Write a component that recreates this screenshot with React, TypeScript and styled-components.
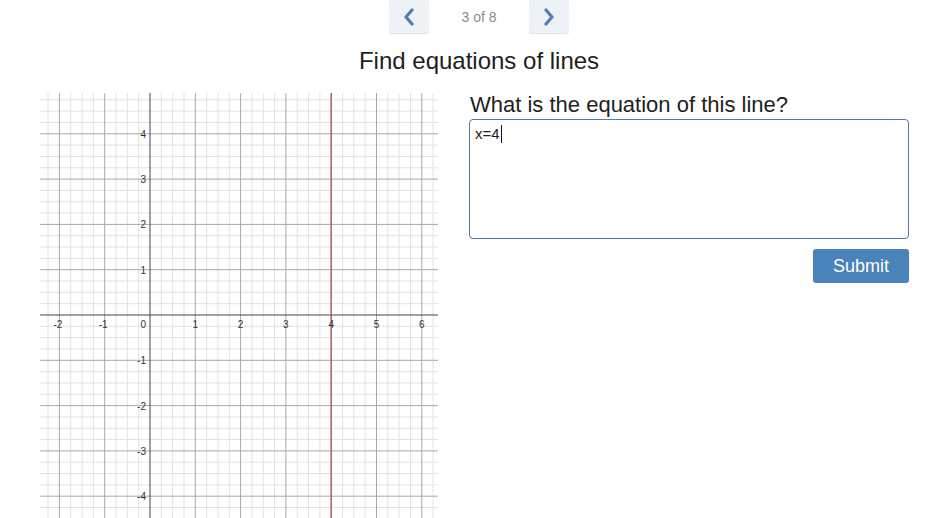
import React from 'react';
import styled, { createGlobalStyle } from 'styled-components';

const GlobalStyle = createGlobalStyle`
  html, body {
    margin: 0;
    padding: 0;
    background: #ffffff;
    overflow: hidden;
  }
  body {
    font-family: 'Liberation Sans', Arial, sans-serif;
    color: #222222;
  }
`;

const Page = styled.div`
  width: 938px;
  height: 518px;
  overflow: hidden;
`;

const Pager = styled.div`
  display: flex;
  justify-content: center;
  align-items: center;
  padding-left: 20px;
  height: 33px;
`;

const NavButton = styled.button`
  width: 40px;
  height: 33px;
  border: none;
  border-radius: 0 0 3px 3px;
  background: #eef2f7;
  box-shadow: 0 1px 1px rgba(0, 0, 0, 0.12);
  display: flex;
  align-items: center;
  justify-content: center;
  padding: 0;
  cursor: pointer;
`;

const PagerLabel = styled.span`
  width: 100px;
  text-align: center;
  font-size: 14px;
  color: #8a8a8a;
`;

const Title = styled.h1`
  margin: 14px 0 0 0;
  padding-left: 20px;
  text-align: center;
  font-size: 24px;
  font-weight: normal;
  line-height: 28px;
  color: #1e1e1e;
`;

const Body = styled.div`
  display: flex;
  align-items: flex-start;
  gap: 31px;
  padding: 18px 0 0 40px;
`;

const GraphFrame = styled.div`
  width: 398px;
  flex: none;
`;

const Panel = styled.div`
  width: 440px;
  display: flex;
  flex-direction: column;
`;

const Question = styled.div`
  font-size: 22px;
  line-height: 24px;
  color: #1e1e1e;
  padding-left: 1px;
  margin-bottom: 2px;
`;

const Answer = styled.div`
  box-sizing: border-box;
  height: 120px;
  border: 1px solid #4f7aa6;
  border-radius: 4px;
  padding: 5px 5px;
  font-size: 15px;
  line-height: 18px;
  color: #222;
  display: flex;
  align-items: flex-start;
`;

const Caret = styled.span`
  display: inline-block;
  width: 1px;
  height: 18px;
  background: #111;
  margin-left: 1px;
`;

const Actions = styled.div`
  display: flex;
  justify-content: flex-end;
  margin-top: 10px;
`;

const SubmitButton = styled.button`
  width: 96px;
  height: 34px;
  border: none;
  border-radius: 3px;
  background: #4a82ba;
  color: #ffffff;
  font-family: 'Liberation Sans', Arial, sans-serif;
  font-size: 18px;
  padding: 0;
`;

const Chevron = ({ dir }: { dir: 'left' | 'right' }) => (
  <svg width="14" height="18" viewBox="0 0 14 18">
    <path
      d={dir === 'left' ? 'M10 2 L4 9 L10 16' : 'M4 2 L10 9 L4 16'}
      fill="none"
      stroke="#4d7fb8"
      strokeWidth="3.2"
      strokeLinecap="round"
      strokeLinejoin="round"
    />
  </svg>
);

// graph geometry, all in svg px
const W = 398;
const H = 440;
const OX = 110;
const OY = 222;
const U = 45.3;

const Graph = () => {
  const minorV: number[] = [];
  const minorH: number[] = [];
  for (let k = -12; k <= 28; k++) {
    const x = OX + (k * U) / 4;
    if (x > 0 && x < W && k % 4 !== 0) minorV.push(x);
  }
  for (let k = -24; k <= 24; k++) {
    const y = OY - (k * U) / 4;
    if (y > 0 && y < H && k % 4 !== 0) minorH.push(y);
  }
  const majorX = [-2, -1, 1, 2, 3, 4, 5, 6];
  const majorY = [4, 3, 2, 1, -1, -2, -3, -4];

  return (
    <svg width={W} height={H} viewBox={`0 0 ${W} ${H}`} style={{ display: 'block' }}>
      {minorV.map(x => (
        <line key={'mv' + x} x1={x} y1={0} x2={x} y2={H} stroke="#e2e2e2" strokeWidth="1" />
      ))}
      {minorH.map(y => (
        <line key={'mh' + y} x1={0} y1={y} x2={W} y2={y} stroke="#e2e2e2" strokeWidth="1" />
      ))}
      {majorX.map(n => (
        <line key={'vx' + n} x1={OX + n * U} y1={0} x2={OX + n * U} y2={H} stroke="#a8a8a8" strokeWidth="1" />
      ))}
      {majorY.map(n => (
        <line key={'hy' + n} x1={0} y1={OY - n * U} x2={W} y2={OY - n * U} stroke="#a8a8a8" strokeWidth="1" />
      ))}
      <line x1={0} y1={OY} x2={W} y2={OY} stroke="#444" strokeWidth="1" />
      <line x1={OX} y1={0} x2={OX} y2={H} stroke="#444" strokeWidth="1" />
      <line x1={OX + 4 * U} y1={0} x2={OX + 4 * U} y2={H} stroke="#a85a5a" strokeWidth="1.3" />

      <g fontFamily="'Liberation Sans', Arial, sans-serif" fontSize="10" fill="#333">
        {majorX.map(n => (
          <text
            key={'lx' + n}
            x={n < 0 ? OX + n * U + 3 : OX + n * U}
            y={OY + 13}
            textAnchor={n < 0 ? 'end' : 'middle'}
          >
            {n}
          </text>
        ))}
        <text x={OX - 4} y={OY + 13} textAnchor="end">0</text>
        {majorY.map(n => (
          <text key={'ly' + n} x={OX - 4} y={OY - n * U + 4} textAnchor="end">
            {n}
          </text>
        ))}
      </g>
    </svg>
  );
};

export default function App() {
  return (
    <Page>
      <GlobalStyle />
      <Pager>
        <NavButton aria-label="previous">
          <Chevron dir="left" />
        </NavButton>
        <PagerLabel>3 of 8</PagerLabel>
        <NavButton aria-label="next">
          <Chevron dir="right" />
        </NavButton>
      </Pager>
      <Title>Find equations of lines</Title>
      <Body>
        <GraphFrame>
          <Graph />
        </GraphFrame>
        <Panel>
          <Question>What is the equation of this line?</Question>
          <Answer>
            x=4<Caret />
          </Answer>
          <Actions>
            <SubmitButton>Submit</SubmitButton>
          </Actions>
        </Panel>
      </Body>
    </Page>
  );
}
